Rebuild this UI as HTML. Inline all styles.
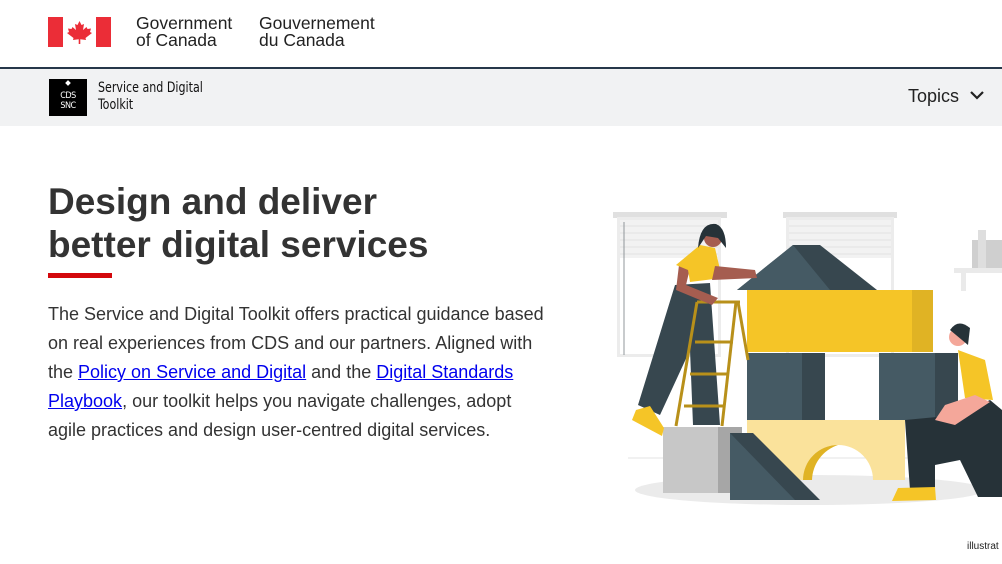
<!DOCTYPE html>
<html><head><meta charset="utf-8"><style>
*{margin:0;padding:0;box-sizing:border-box}
body{width:1002px;height:564px;overflow:hidden;background:#fff;font-family:"Liberation Sans",Arial,sans-serif;color:#333;position:relative}
.a{position:absolute}
.gov{font-size:17.5px;line-height:17px;color:#222}
h1{position:absolute;left:48px;top:180px;font-size:37px;line-height:43px;font-weight:bold;color:#333}
p{position:absolute;left:48px;top:300px;width:500px;font-size:18px;line-height:29px;color:#333}
a{color:#0000ee;text-decoration:underline}
</style></head><body>
<svg class="a" style="left:48px;top:17px" width="63" height="30" viewBox="0 0 63 30">
<rect x="0" y="0" width="15" height="30" fill="#eb2d37"/><rect x="48" y="0" width="15" height="30" fill="#eb2d37"/>
<path d="M31.5 4 L33.5 8 L36 7 L35 13 L38.5 10 L39.5 12 L43 11.5 L42 15 L44 16 L37.5 21 L38 23 L32.3 22.3 L32.3 27 L30.7 27 L30.7 22.3 L25 23 L25.5 21 L19 16 L21 15 L20 11.5 L23.5 12 L24.5 10 L28 13 L27 7 L29.5 8 Z" fill="#eb2d37"/>
</svg>
<div class="a gov" style="left:136px;top:15px">Government<br>of Canada</div>
<div class="a gov" style="left:259px;top:15px">Gouvernement<br>du Canada</div>
<div class="a" style="left:0;top:67px;width:1002px;height:2px;background:#26374a"></div>
<div class="a" style="left:0;top:69px;width:1002px;height:57px;background:#f1f2f3"></div>
<div class="a" style="left:49px;top:79px;width:38px;height:37px;background:#000;color:#fff;font-size:9px;line-height:10px;text-align:center;padding-top:12px;font-family:'DejaVu Sans Condensed',sans-serif;letter-spacing:-0.5px">CDS<br>SNC</div>
<div class="a" style="left:66px;top:81px;width:4px;height:4px;background:#fff;transform:rotate(45deg)"></div>
<div class="a" style="left:98px;top:80px;font-family:'DejaVu Sans Condensed','Liberation Sans Narrow',sans-serif;font-size:14px;line-height:17px;color:#111;transform:scaleX(.88);transform-origin:left">Service and Digital<br>Toolkit</div>
<div class="a" style="left:908px;top:86px;font-size:18px;color:#222">Topics</div>
<svg class="a" style="left:969px;top:89px" width="16" height="12"><path d="M2 3 L8 9 L14 3" stroke="#222" stroke-width="2.2" fill="none"/></svg>
<h1>Design and deliver<br>better digital services</h1>
<div class="a" style="left:48px;top:273px;width:64px;height:5px;background:#d3080c"></div>
<p>The Service and Digital Toolkit offers practical guidance based on real experiences from CDS and our partners. Aligned with the <a>Policy on Service and Digital</a> and the <a>Digital Standards Playbook</a>, our toolkit helps you navigate challenges, adopt agile practices and design user-centred digital services.</p>
<svg class="a" style="left:600px;top:200px" width="402" height="320" viewBox="600 200 402 320">
<rect x="613" y="212" width="114" height="6" fill="#e0e0e0"/><rect x="618.5" y="218.5" width="101" height="137" fill="#fff" stroke="#ececec" stroke-width="3"/><rect x="620" y="220" width="98" height="38" fill="#f2f2f2"/>
<rect x="783" y="212" width="114" height="6" fill="#e0e0e0"/><rect x="787.5" y="218.5" width="105" height="137" fill="#fff" stroke="#ececec" stroke-width="3"/><rect x="789" y="220" width="102" height="38" fill="#f2f2f2"/>
<g stroke="#e2e2e2" stroke-width="1">
<line x1="620" y1="226" x2="718" y2="226"/><line x1="620" y1="233" x2="718" y2="233"/><line x1="620" y1="240" x2="718" y2="240"/><line x1="620" y1="247" x2="718" y2="247"/><line x1="620" y1="254" x2="718" y2="254"/>
<line x1="789" y1="226" x2="891" y2="226"/><line x1="789" y1="233" x2="891" y2="233"/><line x1="789" y1="240" x2="891" y2="240"/><line x1="789" y1="247" x2="891" y2="247"/><line x1="789" y1="254" x2="891" y2="254"/></g>
<line x1="624" y1="222" x2="624" y2="355" stroke="#90979b" stroke-width="1"/>
<rect x="954" y="268" width="48" height="5" fill="#eaeaea"/><rect x="961" y="273" width="5" height="18" fill="#eaeaea"/><rect x="972" y="240" width="30" height="28" fill="#cfcfcf"/><rect x="978" y="230" width="8" height="38" fill="#dedede"/>
<line x1="628" y1="458" x2="1002" y2="458" stroke="#e3e3e3"/>
<ellipse cx="810" cy="490" rx="175" ry="15" fill="#ebebeb"/>
<path d="M737 290 L793 245 L820 245 L877 290 Z" fill="#37474f"/><path d="M737 290 L793 245 L830 290 Z" fill="#455a64"/>
<rect x="747" y="290" width="186" height="62" fill="#f5c527"/><rect x="912" y="290" width="21" height="62" fill="#e0b324"/>
<rect x="747" y="353" width="78" height="67" fill="#455a64"/><rect x="802" y="353" width="23" height="67" fill="#37474f"/>
<rect x="879" y="353" width="79" height="67" fill="#455a64"/><rect x="935" y="353" width="23" height="67" fill="#37474f"/>
<path d="M747 420 H905 V480 H873 A35 35 0 0 0 803 480 H747 Z" fill="#fae29b"/>
<path d="M803 480 A35 35 0 0 1 838 445 A38 38 0 0 0 812 480 Z" fill="#e0b324"/>
<rect x="663" y="427" width="79" height="66" fill="#c7c7c7"/><rect x="718" y="427" width="24" height="66" fill="#a6a6a6"/>
<path d="M730 433 L753 433 L820 500 L730 500 Z" fill="#37474f"/><path d="M730 433 L795 500 L730 500 Z" fill="#455a64"/>
<path d="M675 285 L710 283 L720 425 L693 425 L690 350 L660 415 L638 405 Z" fill="#37474f"/>
<path d="M636 410 L650 406 L664 428 L662 436 L632 420 Z" fill="#f5c527"/>
<g stroke="#b8901a" stroke-width="3" fill="none"><line x1="697" y1="302" x2="676" y2="426"/><line x1="736" y1="302" x2="722" y2="426"/><line x1="738" y1="302" x2="748" y2="360"/><line x1="695" y1="342" x2="733" y2="342"/><line x1="690" y1="374" x2="728" y2="374"/><line x1="684" y1="406" x2="724" y2="406"/><line x1="697" y1="302" x2="740" y2="302"/></g>
<path d="M679 265 L676 290 L712 305 L718 298 L686 285 L690 268 Z" fill="#a55d50"/>
<path d="M676 265 L700 245 L715 248 L722 278 L690 282 L688 270 Z" fill="#f5c527"/>
<path d="M715 266 L755 270 L757 278 L712 280 Z" fill="#a55d50"/>
<circle cx="713" cy="238" r="9" fill="#a55d50"/><path d="M698 248 Q700 222 716 224 Q726 228 726 248 L718 238 L706 236 Z" fill="#263238"/>
<path d="M905 420 L958 415 L990 400 L1002 410 L1002 497 L978 497 L960 460 L935 465 L935 490 L910 490 Z" fill="#263238"/>
<path d="M898 488 L935 487 L936 500 L892 501 Z" fill="#f5c527"/>
<path d="M958 350 L985 360 L993 400 L965 398 Z" fill="#f5c527"/>
<path d="M945 405 L975 395 L990 402 L955 425 L935 420 Z" fill="#f4a79a"/>
<circle cx="958" cy="337" r="9" fill="#f4a79a"/><path d="M950 330 Q958 318 970 328 L968 345 Z" fill="#263238"/>
</svg>
<div class="a" style="left:967px;top:541px;font-size:10px;color:#222">illustrat</div>
</body></html>
